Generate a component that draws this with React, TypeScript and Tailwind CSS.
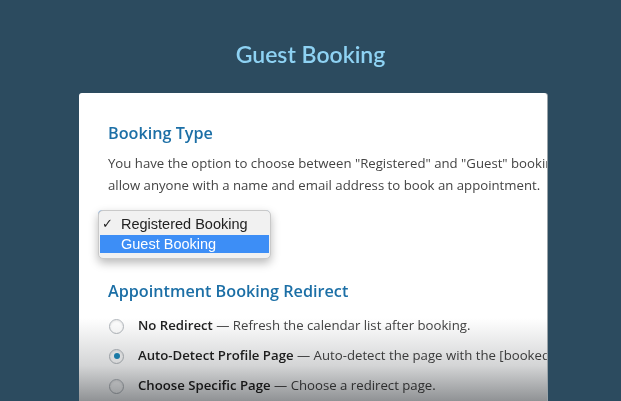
export default function App() {
  const sans = { fontFamily: '"Open Sans", "Noto Sans", sans-serif' };

  const options = [
    {
      title: "No Redirect",
      body: "Refresh the calendar list after booking.",
      checked: false,
    },
    {
      title: "Auto-Detect Profile Page",
      body: "Auto-detect the page with the [booked-profile] shortcode.",
      checked: true,
    },
    {
      title: "Choose Specific Page",
      body: "Choose a redirect page.",
      checked: false,
    },
  ];

  return (
    <div
      className="h-[401px] w-full overflow-hidden bg-[#2c4b5f]"
      style={sans}
    >
      <h1
        className="pt-[39px] text-center text-[23px] font-semibold leading-[30px] text-[#8ed2f3]"
        style={{ fontFamily: 'Lato, "Open Sans", sans-serif' }}
      >
        Guest Booking
      </h1>

      <div className="relative ml-[79px] mt-[24px] h-[320px] w-[468px] overflow-hidden rounded-t-[3px] bg-white px-[29px] pt-[28px] shadow-[1px_0_0_#9aa3a8]">
        <h2 className="text-[16.2px] font-semibold leading-[24px] text-[#1c6fa6]">
          Booking Type
        </h2>

        <p className="mt-[7px] whitespace-nowrap text-[13.2px] leading-[22px] text-[#444]">
          You have the option to choose between "Registered" and "Guest"
          bookings. Guest bookings will
          <br />
          allow anyone with a name and email address to book an appointment.
        </p>

        <div className="relative -ml-[10px] mt-[14px] h-[24px] w-[172px] rounded-[4px] border border-[#7fb0e6]">
          <div
            className="absolute -left-px -top-px w-[173px] rounded-[5px] border border-[#c9c9c9] bg-[#f1f1f1] pb-[5px] pt-[4px] text-[14.5px] leading-[18px] text-[#222] shadow-[0_4px_10px_rgba(0,0,0,0.28)]"
            style={{ fontFamily: '"Liberation Sans", Arial, sans-serif' }}
          >
            <div className="flex h-[18px] items-center">
              <span className="w-[22px] pl-[3px] text-[13px]">✓</span>
              <span>Registered Booking</span>
            </div>
            <div className="mx-px mt-[2px] flex h-[18px] items-center bg-[#3d8ef6] pl-[21px] text-white">
              Guest Booking
            </div>
          </div>
        </div>

        <h2 className="mt-[45px] text-[16.2px] font-semibold leading-[24px] text-[#1c6fa6]">
          Appointment Booking Redirect
        </h2>

        <div className="mt-[12px] flex flex-col gap-[8px]">
          {options.map((option) => (
            <div
              key={option.title}
              className="flex h-[22px] items-center whitespace-nowrap text-[13.2px] text-[#444]"
            >
              <span className="ml-[1px] flex h-[15px] w-[15px] shrink-0 items-center justify-center rounded-full border border-[#b4b9be] bg-white shadow-[inset_0_1px_2px_rgba(0,0,0,0.1)]">
                {option.checked ? (
                  <span className="h-[6px] w-[6px] rounded-full bg-[#1e8cbe]" />
                ) : null}
              </span>
              <span className="ml-[14px]">
                <span className="font-semibold text-[#222]">{option.title}</span>{" "}
                — {option.body}
              </span>
            </div>
          ))}
        </div>

        <div className="pointer-events-none absolute inset-x-0 bottom-0 h-[95px] bg-gradient-to-b from-white via-[#d4d5d6] to-[#7a7d80] mix-blend-multiply" />
      </div>
    </div>
  );
}
